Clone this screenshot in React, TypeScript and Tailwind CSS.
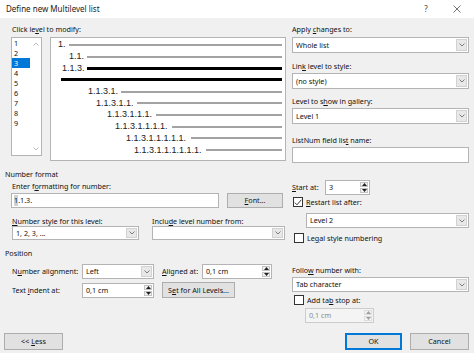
import React from "react";

const U = ({ children }: { children: React.ReactNode }) => (
  <span className="underline underline-offset-[1px]">{children}</span>
);

function Chevron() {
  return (
    <svg width="6" height="4" viewBox="0 0 6 4" className="block">
      <path d="M0.5 0.5 L3 3 L5.5 0.5" fill="none" stroke="#606060" strokeWidth="0.8" />
    </svg>
  );
}

function Select({ className, children }: { className: string; children?: React.ReactNode }) {
  return (
    <div className={`flex items-stretch bg-white border border-[#b4b4b4] ${className}`}>
      <div className="flex-1 flex items-center pl-[3px] whitespace-nowrap overflow-hidden">{children}</div>
      <div className="w-[11px] my-[1px] mr-[1px] flex items-center justify-center bg-[#e8e8e8] border border-[#d2d2d2]">
        <Chevron />
      </div>
    </div>
  );
}

function Tri({ up, color }: { up?: boolean; color: string }) {
  return (
    <svg width="5" height="3" viewBox="0 0 5 3" className="block">
      <path d={up ? "M0 3 L2.5 0 L5 3 Z" : "M0 0 L2.5 3 L5 0 Z"} fill={color} />
    </svg>
  );
}

function Spin({ className, value, disabled }: { className: string; value: string; disabled?: boolean }) {
  const c = disabled ? "#a0a0a0" : "#222";
  return (
    <div className={`flex items-stretch border ${disabled ? "border-[#cccccc] bg-[#f4f4f4] text-[#8a8a8a]" : "border-[#b4b4b4] bg-white"} ${className}`}>
      <div className="flex-1 flex items-center pl-[3px]">{value}</div>
      <div className="w-[10px] flex flex-col gap-[1px] p-[1px]">
        <div className={`flex-1 flex items-center justify-center border ${disabled ? "border-[#dddddd]" : "border-[#c4c4c4] bg-[#f2f2f2]"}`}>
          <Tri up color={c} />
        </div>
        <div className={`flex-1 flex items-center justify-center border ${disabled ? "border-[#dddddd]" : "border-[#c4c4c4] bg-[#f2f2f2]"}`}>
          <Tri color={c} />
        </div>
      </div>
    </div>
  );
}

function Check({ checked }: { checked?: boolean }) {
  return (
    <div className="w-[10px] h-[10px] border border-[#333] bg-white flex items-center justify-center shrink-0">
      {checked && (
        <svg width="8" height="7" viewBox="0 0 8 7">
          <path d="M0.8 3.6 L3 5.8 L7.3 0.8" fill="none" stroke="#222" strokeWidth="0.9" />
        </svg>
      )}
    </div>
  );
}

function Btn({ className, children }: { className: string; children: React.ReactNode }) {
  return (
    <div className={`flex items-center justify-center bg-[#e1e1e1] border border-[#adadad] ${className}`}>
      {children}
    </div>
  );
}

const preview = [
  { text: "1.", x: 58, line: 69, black: false },
  { text: "1.1.", x: 69, line: 87, black: false },
  { text: "1.1.3.", x: 62, line: 87, black: true },
  { text: "", x: 61, line: 61, black: true },
  { text: "1.1.3.1.", x: 88, line: 121, black: false },
  { text: "1.1.3.1.1.", x: 96, line: 137, black: false },
  { text: "1.1.3.1.1.1.", x: 107, line: 156, black: false },
  { text: "1.1.3.1.1.1.1.", x: 115, line: 172, black: false },
  { text: "1.1.3.1.1.1.1.1.", x: 126, line: 191, black: false },
  { text: "1.1.3.1.1.1.1.1.1.", x: 134, line: 206, black: false },
];

export default function App() {
  return (
    <div
      className="w-[474px] h-[353px] bg-[#f0f0f0] text-[7.2px] text-[#111] overflow-hidden flex flex-col"
      style={{ fontFamily: '"Noto Sans", "Open Sans", sans-serif' }}
    >
      {/* title bar */}
      <div className="h-[18px] shrink-0 bg-white flex items-center pl-[6px]">
        <span className="text-[8px] text-[#222] flex-1">Define new Multilevel list</span>
        <span className="text-[8px] text-[#444] w-[10px] mr-[22px] text-center">?</span>
        <svg width="8" height="8" viewBox="0 0 8 8" className="mr-[13px]">
          <path d="M0.5 0.5 L7.5 7.5 M7.5 0.5 L0.5 7.5" stroke="#333" strokeWidth="0.7" />
        </svg>
      </div>

      {/* top section */}
      <div className="h-[150px] shrink-0 flex">
        <div className="ml-[11px] w-[275px] flex flex-col">
          <div className="mt-[5px] h-[12px] leading-[12px] pl-[1px]">
            Click le<U>v</U>el to modify:
          </div>
          <div className="mt-[2px] flex">
            <div className="w-[31px] h-[119px] bg-white border border-[#b4b4b4] flex">
              <div className="flex-1 flex flex-col">
                {["1", "2", "3", "4", "5", "6", "7", "8", "9"].map((n) => (
                  <div
                    key={n}
                    className={`h-[10px] leading-[10px] pl-[2px] ${n === "3" ? "bg-[#0078d7] text-white" : ""}`}
                  >
                    {n}
                  </div>
                ))}
              </div>
              <div className="w-[11px] flex flex-col justify-between items-center py-[4px]">
                <svg width="6" height="4" viewBox="0 0 6 4">
                  <path d="M0.5 3.5 L3 1 L5.5 3.5" fill="none" stroke="#a8a8a8" strokeWidth="0.8" />
                </svg>
                <svg width="6" height="4" viewBox="0 0 6 4">
                  <path d="M0.5 0.5 L3 3 L5.5 0.5" fill="none" stroke="#a8a8a8" strokeWidth="0.8" />
                </svg>
              </div>
            </div>
            <div
              className="ml-[8px] w-[236px] h-[124px] bg-white border border-[#b4b4b4] pt-[1px] pr-[3px] flex flex-col"
              style={{ fontFamily: '"Liberation Sans", Arial, sans-serif' }}
            >
              {preview.map((r, i) => (
                <div key={i} className="h-[11.7px] flex items-center text-[9px] text-[#222]">
                  <div className="shrink-0 whitespace-nowrap leading-[9px]" style={{ width: r.line - 51 }}>
                    <span style={{ marginLeft: r.x - 51 }}>{r.text}</span>
                  </div>
                  <div className={`flex-1 ${r.black ? "h-[3px] bg-black" : "h-[2px] bg-[#a3a3a3]"}`} />
                </div>
              ))}
            </div>
          </div>
        </div>

        <div className="ml-[6px] w-[177px] flex flex-col">
          <div className="mt-[5px] h-[12px] leading-[12px]">
            Apply <U>c</U>hanges to:
          </div>
          <Select className="mt-[2px] h-[16px]">Whole list</Select>
          <div className="mt-[7px] h-[12px] leading-[12px]">
            Lin<U>k</U> level to style:
          </div>
          <Select className="mt-[1px] h-[16px]">(no style)</Select>
          <div className="mt-[6px] h-[12px] leading-[12px]">
            Level to s<U>h</U>ow in gallery:
          </div>
          <Select className="mt-[1px] h-[16px]">Level 1</Select>
          <div className="mt-[10px] h-[12px] leading-[12px]">
            ListNum field lis<U>t</U> name:
          </div>
          <div className="mt-[1px] h-[16px] bg-white border border-[#b4b4b4]" />
        </div>
      </div>

      {/* number format */}
      <div className="h-[75px] shrink-0 flex flex-col">
        <div className="h-[12px] leading-[12px] pl-[5px]">Number format</div>
        <div className="flex">
          <div className="ml-[11px] w-[275px] flex flex-col">
            <div className="h-[12px] leading-[12px] pl-[1px]">
              Enter f<U>o</U>rmatting for number:
            </div>
            <div className="mt-[1px] flex">
              <div className="w-[208px] h-[15px] bg-white border border-[#b4b4b4] flex items-center pl-[2px]">
                <span className="bg-[#d0d0d0]">1</span>
                <span>.1.3.</span>
              </div>
              <Btn className="ml-[8px] w-[56px] h-[15px]">
                <span>
                  <U>F</U>ont...
                </span>
              </Btn>
            </div>
            <div className="mt-[8px] h-[10px] leading-[10px] flex">
              <div className="w-[141px] pl-[1px]">
                <U>N</U>umber style for this level:
              </div>
              <div>
                Inclu<U>d</U>e level number from:
              </div>
            </div>
            <div className="flex">
              <Select className="ml-[1px] w-[127px] h-[14px]">1, 2, 3, ...</Select>
              <Select className="ml-[13px] w-[133px] h-[14px]" />
            </div>
          </div>
          <div className="ml-[6px] w-[177px] flex flex-col">
            <div className="h-[15px] flex items-center">
              <div className="w-[33px]">
                <U>S</U>tart at:
              </div>
              <Spin className="w-[45px] h-[15px]" value="3" />
            </div>
            <div className="mt-[2px] h-[10px] flex items-center pl-[1px]">
              <Check checked />
              <span className="ml-[3px]">
                <U>R</U>estart list after:
              </span>
            </div>
            <Select className="mt-[6px] ml-[14px] h-[15px]">Level 2</Select>
            <div className="mt-[5px] h-[10px] flex items-center pl-[2px]">
              <Check />
              <span className="ml-[3px]">
                Le<U>g</U>al style numbering
              </span>
            </div>
          </div>
        </div>
      </div>

      {/* position */}
      <div className="h-[87px] shrink-0 flex flex-col">
        <div className="mt-[4px] h-[12px] leading-[12px] pl-[5px]">Position</div>
        <div className="flex">
          <div className="w-[286px] flex flex-col">
            <div className="mt-[5px] h-[15px] flex items-center">
              <div className="ml-[12px] w-[70px]">
                N<U>u</U>mber alignment:
              </div>
              <Select className="w-[72px] h-[15px]">Left</Select>
              <div className="ml-[8px] w-[40px]">
                <U>A</U>ligned at:
              </div>
              <Spin className="w-[70px] h-[15px]" value="0,1 cm" />
            </div>
            <div className="mt-[3px] h-[16px] flex items-center">
              <div className="ml-[12px] w-[70px]">
                Text <U>i</U>ndent at:
              </div>
              <Spin className="w-[72px] h-[15px]" value="0,1 cm" />
              <Btn className="ml-[8px] w-[73px] h-[16px]">
                <span>
                  S<U>e</U>t for All Levels...
                </span>
              </Btn>
            </div>
          </div>
          <div className="ml-[6px] w-[177px] flex flex-col">
            <div className="mt-[5px] h-[12px] leading-[12px]">
              Follo<U>w</U> number with:
            </div>
            <Select className="mt-[1px] h-[15px]">Tab character</Select>
            <div className="mt-[3px] h-[10px] flex items-center pl-[2px]">
              <Check />
              <span className="ml-[3px]">
                Add ta<U>b</U> stop at:
              </span>
            </div>
            <Spin className="mt-[3px] ml-[13px] w-[69px] h-[15px]" value="0,1 cm" disabled />
          </div>
        </div>
      </div>

      {/* bottom buttons */}
      <div className="flex-1 flex pt-[3px]">
        <Btn className="ml-[4px] w-[59px] h-[17px]">
          <span>
            &lt;&lt; <U>L</U>ess
          </span>
        </Btn>
        <div className="flex-1" />
        <Btn className="w-[57px] h-[17px] !border-[#0078d7] shadow-[inset_0_0_0_1px_#0078d7]">
          <span>OK</span>
        </Btn>
        <Btn className="ml-[8px] mr-[5px] w-[59px] h-[17px]">
          <span>Cancel</span>
        </Btn>
      </div>
    </div>
  );
}
